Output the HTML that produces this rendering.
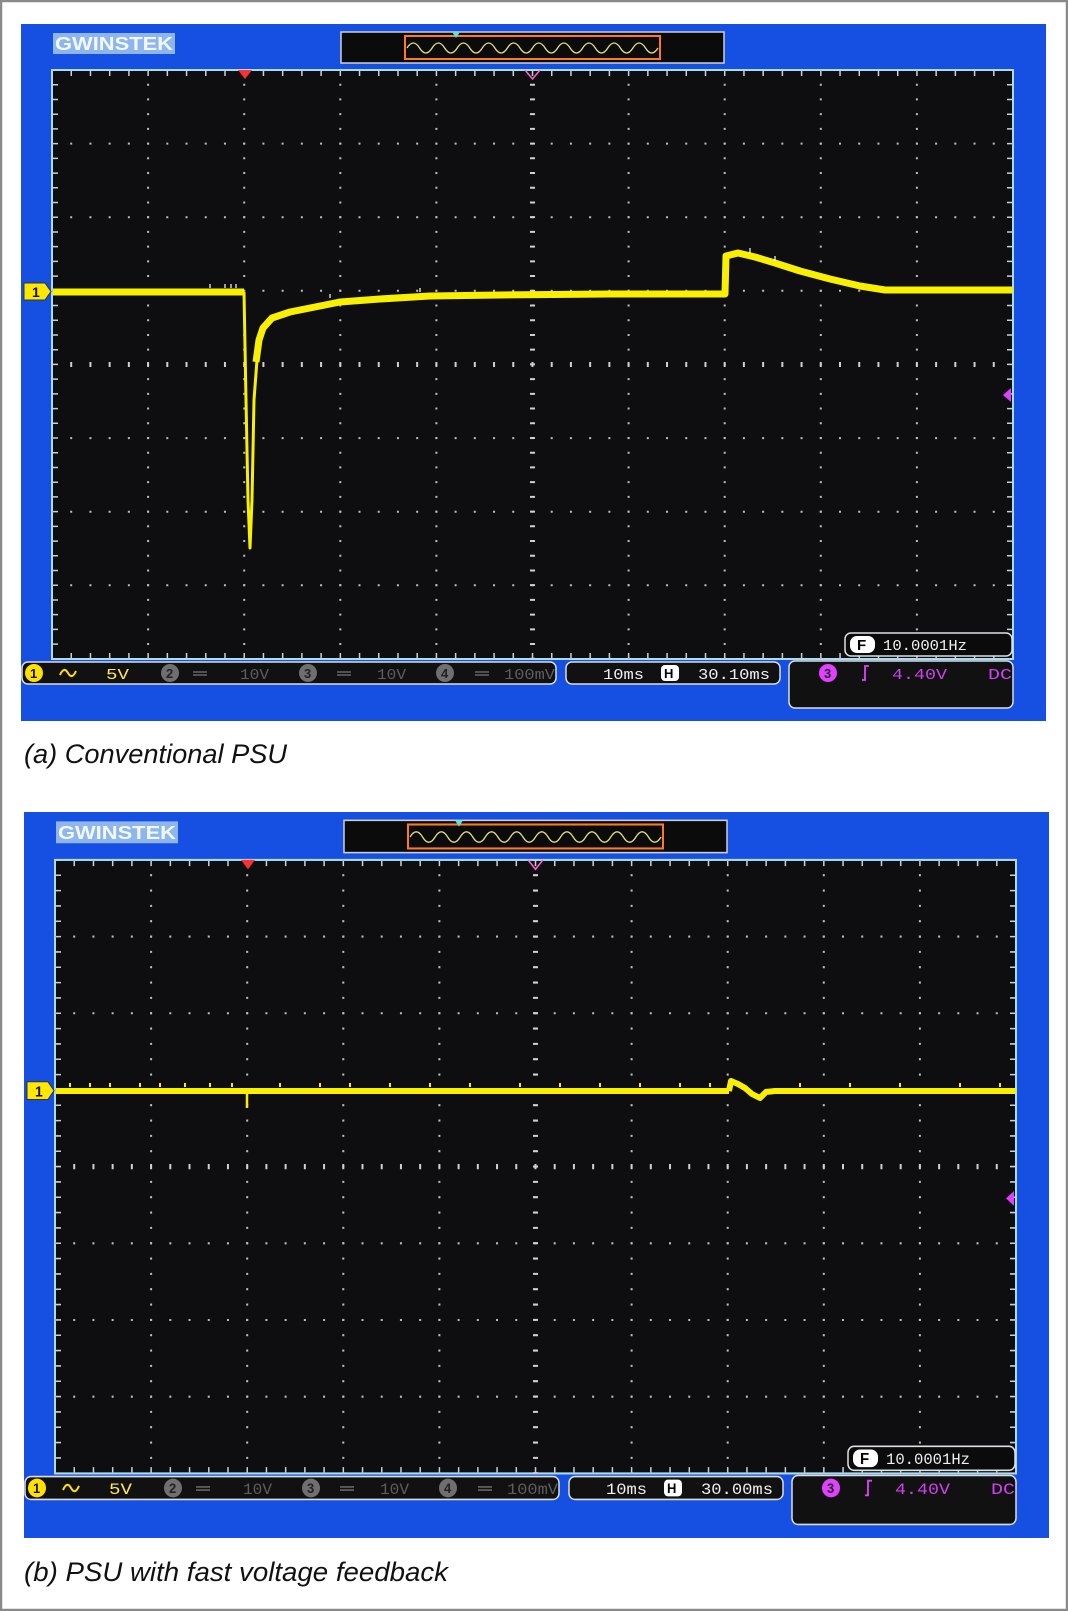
<!DOCTYPE html>
<html><head><meta charset="utf-8"><style>
html,body{margin:0;padding:0;background:#fff}
svg{display:block}
.m{font-family:"Liberation Mono",monospace;font-size:15px}
.cap{font-family:"Liberation Sans",sans-serif;font-style:italic;font-size:27px;fill:#111}
</style></head><body>
<svg width="1068" height="1611" viewBox="0 0 1068 1611" xmlns="http://www.w3.org/2000/svg">
<rect x="1" y="1" width="1066" height="1609" fill="#fff" stroke="#8a8a8a" stroke-width="2.5"/>

<!-- PANEL A -->
<g transform="translate(21,24)">
<rect width="1025" height="697" fill="#1650e2"/>
<rect x="32" y="9" width="122" height="21" fill="#8fb6ea"/>
<text x="34" y="26" font-family="Liberation Sans,sans-serif" font-weight="bold" font-size="18" fill="#f2f8ff" textLength="118" lengthAdjust="spacingAndGlyphs">GWINSTEK</text>
<rect x="320" y="8" width="383" height="31" fill="#0b0b0b" stroke="#cfcfcf" stroke-width="1.5"/>
<rect x="384" y="12" width="255" height="23" fill="none" stroke="#ff7a1a" stroke-width="2"/>
<path d="M386,24 q6.275,-10 12.55,0 t12.55,0 t12.55,0 t12.55,0 t12.55,0 t12.55,0 t12.55,0 t12.55,0 t12.55,0 t12.55,0 t12.55,0 t12.55,0 t12.55,0 t12.55,0 t12.55,0 t12.55,0 t12.55,0 t12.55,0 t12.55,0 t12.55,0" fill="none" stroke="#e8e080" stroke-width="1.3"/>
<polygon points="431,8 439,8 435,14" fill="#5fe0d0"/>
<rect x="31" y="46" width="961" height="589" fill="#0e0e10" stroke="#a8dcef" stroke-width="2"/>
<g stroke="#bdbdbd" stroke-width="2" stroke-dasharray="2 12.72" stroke-dashoffset="-13.7">
<path d="M127.1,46V635M223.2,46V635M319.3,46V635M415.4,46V635M607.6,46V635M703.7,46V635M799.8,46V635M895.9,46V635"/>
</g>
<g stroke="#bdbdbd" stroke-width="2" stroke-dasharray="2 17.22" stroke-dashoffset="-18.2">
<path d="M31,119.6H992M31,193.2H992M31,266.8H992M31,414.1H992M31,487.7H992M31,561.3H992"/>
</g>
<path d="M511.5,46V635" stroke="#d0d0d0" stroke-width="5" stroke-dasharray="2 12.72" stroke-dashoffset="-13.7"/>
<path d="M31,340.5H992" stroke="#d0d0d0" stroke-width="5" stroke-dasharray="2 17.22" stroke-dashoffset="-18.2"/>
<g stroke="#cfcfcf" stroke-width="5" stroke-dasharray="1.5 17.72" stroke-dashoffset="-18.5"><path d="M31,49.5H992M31,631.5H992"/></g>
<g stroke="#cfcfcf" stroke-width="5" stroke-dasharray="1.5 13.22" stroke-dashoffset="-14"><path d="M34.5,46V635M988.5,46V635"/></g>
<polygon points="217,46 231,46 224,55" fill="#ff3030"/>
<polyline points="504,46 511.5,55 519,46" fill="none" stroke="#ff66cc" stroke-width="1.5"/>
<polygon points="3,259 24,259 30,267.5 24,276 3,276" fill="#ffe800" stroke="#333" stroke-width="1"/>
<text x="11" y="273" font-family="Liberation Sans,sans-serif" font-weight="bold" font-size="14" fill="#111">1</text>
<polygon points="982,371 990,364 990,378" fill="#e040ff"/>
<rect x="824" y="609" width="167" height="23" rx="6" fill="#0b0b0b" stroke="#e0e0e0" stroke-width="1.5"/>
<rect x="829" y="612" width="25" height="17" rx="7" fill="#fff"/>
<text x="836" y="626" font-family="Liberation Sans,sans-serif" font-weight="bold" font-size="15" fill="#000">F</text>
<text x="862" y="626" class="m" fill="#f0f0f0" textLength="84" lengthAdjust="spacingAndGlyphs">10.0001Hz</text>
<rect x="1" y="638" width="534" height="22" rx="6" fill="#111" stroke="#dcdcdc" stroke-width="1.5"/>
<rect x="545" y="638" width="214" height="22" rx="6" fill="#111" stroke="#dcdcdc" stroke-width="1.5"/>
<rect x="768" y="637" width="224" height="47" rx="6" fill="#111" stroke="#dcdcdc" stroke-width="1.5"/>
<circle cx="13" cy="649" r="9" fill="#ffe000"/><text x="9" y="654" font-family="Liberation Sans,sans-serif" font-weight="bold" font-size="13" fill="#111">1</text>
<path d="M39,651 q4,-9 8,-2 t8,-2" fill="none" stroke="#ffe000" stroke-width="2"/>
<text x="85" y="655" class="m" fill="#ffe85a" textLength="23" lengthAdjust="spacingAndGlyphs">5V</text>
<circle cx="149" cy="649" r="9" fill="#6f6f6f"/><text x="145" y="654" font-family="Liberation Sans,sans-serif" font-weight="bold" font-size="13" fill="#222">2</text>
<path d="M172,648h14M172,651h14" stroke="#666" stroke-width="1.5"/>
<text x="219" y="655" class="m" fill="#5e5e5e" textLength="29" lengthAdjust="spacingAndGlyphs">10V</text>
<circle cx="287" cy="649" r="9" fill="#6f6f6f"/><text x="283" y="654" font-family="Liberation Sans,sans-serif" font-weight="bold" font-size="13" fill="#222">3</text>
<path d="M316,648h14M316,651h14" stroke="#666" stroke-width="1.5"/>
<text x="356" y="655" class="m" fill="#5e5e5e" textLength="29" lengthAdjust="spacingAndGlyphs">10V</text>
<circle cx="424" cy="649" r="9" fill="#6f6f6f"/><text x="420" y="654" font-family="Liberation Sans,sans-serif" font-weight="bold" font-size="13" fill="#222">4</text>
<path d="M454,648h14M454,651h14" stroke="#666" stroke-width="1.5"/>
<text x="483" y="655" class="m" fill="#5e5e5e" textLength="51" lengthAdjust="spacingAndGlyphs">100mV</text>
<text x="582" y="655" class="m" fill="#f0f0f0" textLength="41" lengthAdjust="spacingAndGlyphs">10ms</text>
<rect x="640" y="641" width="18" height="16" rx="4" fill="#fff"/><text x="643" y="654" font-family="Liberation Sans,sans-serif" font-weight="bold" font-size="13" fill="#000">H</text>
<text x="677" y="655" class="m" fill="#f0f0f0" textLength="72" lengthAdjust="spacingAndGlyphs">30.10ms</text>
<circle cx="807" cy="649" r="9" fill="#e040ff"/><text x="803" y="654" font-family="Liberation Sans,sans-serif" font-weight="bold" font-size="13" fill="#222">3</text>
<path d="M841,656h3v-14h4" fill="none" stroke="#e040ff" stroke-width="1.8"/>
<text x="871" y="655" class="m" fill="#d040f0" textLength="55" lengthAdjust="spacingAndGlyphs">4.40V</text>
<text x="967" y="655" class="m" fill="#d040f0" textLength="24" lengthAdjust="spacingAndGlyphs">DC</text>
</g>
<!-- trace a -->
<g fill="none" stroke="#f8f000" stroke-linejoin="round">
<path d="M53,292H244" stroke-width="7"/>
<path d="M244,292 L246,400 L248,500 L250,548 L252,500 L254,400 L257,360" stroke-width="3"/>
<path d="M256,362 L259,340 L263,328 L272,318 L290,312 L310,308 L340,302 L380,299 L430,296 L500,295 L610,294 L725,294 L726,256 L738,253 L755,257 L775,263 L800,271 L830,279 L860,286 L885,290 L1013,290" stroke-width="7"/>
</g>
<path d="M210,288v-4M225,288v-4M231,288v-4M236,288v-4M330,298v-4M420,292v-4M750,253v-5M775,261v-5" stroke="#fff" stroke-width="1.2"/>
<text x="24" y="763" class="cap" textLength="263" lengthAdjust="spacingAndGlyphs">(a) Conventional PSU</text>

<!-- PANEL B -->
<g transform="translate(24,812) scale(1,1.0416)">
<rect width="1025" height="697" fill="#1650e2"/>
<rect x="32" y="9" width="122" height="21" fill="#8fb6ea"/>
<text x="34" y="26" font-family="Liberation Sans,sans-serif" font-weight="bold" font-size="18" fill="#f2f8ff" textLength="118" lengthAdjust="spacingAndGlyphs">GWINSTEK</text>
<rect x="320" y="8" width="383" height="31" fill="#0b0b0b" stroke="#cfcfcf" stroke-width="1.5"/>
<rect x="384" y="12" width="255" height="23" fill="none" stroke="#ff7a1a" stroke-width="2"/>
<path d="M386,24 q6.275,-10 12.55,0 t12.55,0 t12.55,0 t12.55,0 t12.55,0 t12.55,0 t12.55,0 t12.55,0 t12.55,0 t12.55,0 t12.55,0 t12.55,0 t12.55,0 t12.55,0 t12.55,0 t12.55,0 t12.55,0 t12.55,0 t12.55,0 t12.55,0" fill="none" stroke="#e8e080" stroke-width="1.3"/>
<polygon points="431,8 439,8 435,14" fill="#5fe0d0"/>
<rect x="31" y="46" width="961" height="589" fill="#0e0e10" stroke="#a8dcef" stroke-width="2"/>
<g stroke="#bdbdbd" stroke-width="2" stroke-dasharray="2 12.72" stroke-dashoffset="-13.7">
<path d="M127.1,46V635M223.2,46V635M319.3,46V635M415.4,46V635M607.6,46V635M703.7,46V635M799.8,46V635M895.9,46V635"/>
</g>
<g stroke="#bdbdbd" stroke-width="2" stroke-dasharray="2 17.22" stroke-dashoffset="-18.2">
<path d="M31,119.6H992M31,193.2H992M31,266.8H992M31,414.1H992M31,487.7H992M31,561.3H992"/>
</g>
<path d="M511.5,46V635" stroke="#d0d0d0" stroke-width="5" stroke-dasharray="2 12.72" stroke-dashoffset="-13.7"/>
<path d="M31,340.5H992" stroke="#d0d0d0" stroke-width="5" stroke-dasharray="2 17.22" stroke-dashoffset="-18.2"/>
<g stroke="#cfcfcf" stroke-width="5" stroke-dasharray="1.5 17.72" stroke-dashoffset="-18.5"><path d="M31,49.5H992M31,631.5H992"/></g>
<g stroke="#cfcfcf" stroke-width="5" stroke-dasharray="1.5 13.22" stroke-dashoffset="-14"><path d="M34.5,46V635M988.5,46V635"/></g>
<polygon points="217,46 231,46 224,55" fill="#ff3030"/>
<polyline points="504,46 511.5,55 519,46" fill="none" stroke="#ff66cc" stroke-width="1.5"/>
<polygon points="3,259 24,259 30,267.5 24,276 3,276" fill="#ffe800" stroke="#333" stroke-width="1"/>
<text x="11" y="273" font-family="Liberation Sans,sans-serif" font-weight="bold" font-size="14" fill="#111">1</text>
<polygon points="982,371 990,364 990,378" fill="#e040ff"/>
<rect x="824" y="609" width="167" height="23" rx="6" fill="#0b0b0b" stroke="#e0e0e0" stroke-width="1.5"/>
<rect x="829" y="612" width="25" height="17" rx="7" fill="#fff"/>
<text x="836" y="626" font-family="Liberation Sans,sans-serif" font-weight="bold" font-size="15" fill="#000">F</text>
<text x="862" y="626" class="m" fill="#f0f0f0" textLength="84" lengthAdjust="spacingAndGlyphs">10.0001Hz</text>
<rect x="1" y="638" width="534" height="22" rx="6" fill="#111" stroke="#dcdcdc" stroke-width="1.5"/>
<rect x="545" y="638" width="214" height="22" rx="6" fill="#111" stroke="#dcdcdc" stroke-width="1.5"/>
<rect x="768" y="637" width="224" height="47" rx="6" fill="#111" stroke="#dcdcdc" stroke-width="1.5"/>
<circle cx="13" cy="649" r="9" fill="#ffe000"/><text x="9" y="654" font-family="Liberation Sans,sans-serif" font-weight="bold" font-size="13" fill="#111">1</text>
<path d="M39,651 q4,-9 8,-2 t8,-2" fill="none" stroke="#ffe000" stroke-width="2"/>
<text x="85" y="655" class="m" fill="#ffe85a" textLength="23" lengthAdjust="spacingAndGlyphs">5V</text>
<circle cx="149" cy="649" r="9" fill="#6f6f6f"/><text x="145" y="654" font-family="Liberation Sans,sans-serif" font-weight="bold" font-size="13" fill="#222">2</text>
<path d="M172,648h14M172,651h14" stroke="#666" stroke-width="1.5"/>
<text x="219" y="655" class="m" fill="#5e5e5e" textLength="29" lengthAdjust="spacingAndGlyphs">10V</text>
<circle cx="287" cy="649" r="9" fill="#6f6f6f"/><text x="283" y="654" font-family="Liberation Sans,sans-serif" font-weight="bold" font-size="13" fill="#222">3</text>
<path d="M316,648h14M316,651h14" stroke="#666" stroke-width="1.5"/>
<text x="356" y="655" class="m" fill="#5e5e5e" textLength="29" lengthAdjust="spacingAndGlyphs">10V</text>
<circle cx="424" cy="649" r="9" fill="#6f6f6f"/><text x="420" y="654" font-family="Liberation Sans,sans-serif" font-weight="bold" font-size="13" fill="#222">4</text>
<path d="M454,648h14M454,651h14" stroke="#666" stroke-width="1.5"/>
<text x="483" y="655" class="m" fill="#5e5e5e" textLength="51" lengthAdjust="spacingAndGlyphs">100mV</text>
<text x="582" y="655" class="m" fill="#f0f0f0" textLength="41" lengthAdjust="spacingAndGlyphs">10ms</text>
<rect x="640" y="641" width="18" height="16" rx="4" fill="#fff"/><text x="643" y="654" font-family="Liberation Sans,sans-serif" font-weight="bold" font-size="13" fill="#000">H</text>
<text x="677" y="655" class="m" fill="#f0f0f0" textLength="72" lengthAdjust="spacingAndGlyphs">30.00ms</text>
<circle cx="807" cy="649" r="9" fill="#e040ff"/><text x="803" y="654" font-family="Liberation Sans,sans-serif" font-weight="bold" font-size="13" fill="#222">3</text>
<path d="M841,656h3v-14h4" fill="none" stroke="#e040ff" stroke-width="1.8"/>
<text x="871" y="655" class="m" fill="#d040f0" textLength="55" lengthAdjust="spacingAndGlyphs">4.40V</text>
<text x="967" y="655" class="m" fill="#d040f0" textLength="24" lengthAdjust="spacingAndGlyphs">DC</text>
</g>
<!-- trace b -->
<g fill="none" stroke="#f8f000" stroke-linejoin="round">
<path d="M56,1091H729" stroke-width="6"/>
<path d="M247,1092V1108" stroke-width="2.5"/>
<path d="M729,1091 L731,1081 L738,1084 L745,1088 L752,1094 L760,1098 L766,1092 L775,1091 L1016,1091" stroke-width="6"/>
</g>
<path d="M70,1087v-4M90,1087v-4M110,1087v-4M140,1087v-4M160,1087v-4M185,1087v-4M210,1087v-4M232,1087v-4M280,1087v-4M320,1087v-4M350,1087v-4M390,1087v-4M430,1087v-4M470,1087v-4M520,1087v-4M560,1087v-4M600,1087v-4M640,1087v-4M680,1087v-4M710,1087v-4M800,1087v-4M850,1087v-4M900,1087v-4M960,1087v-4M1000,1087v-4" stroke="#f8f000" stroke-width="2"/>
<text x="24" y="1581" class="cap" textLength="424" lengthAdjust="spacingAndGlyphs">(b) PSU with fast voltage feedback</text>
</svg>
</body></html>
